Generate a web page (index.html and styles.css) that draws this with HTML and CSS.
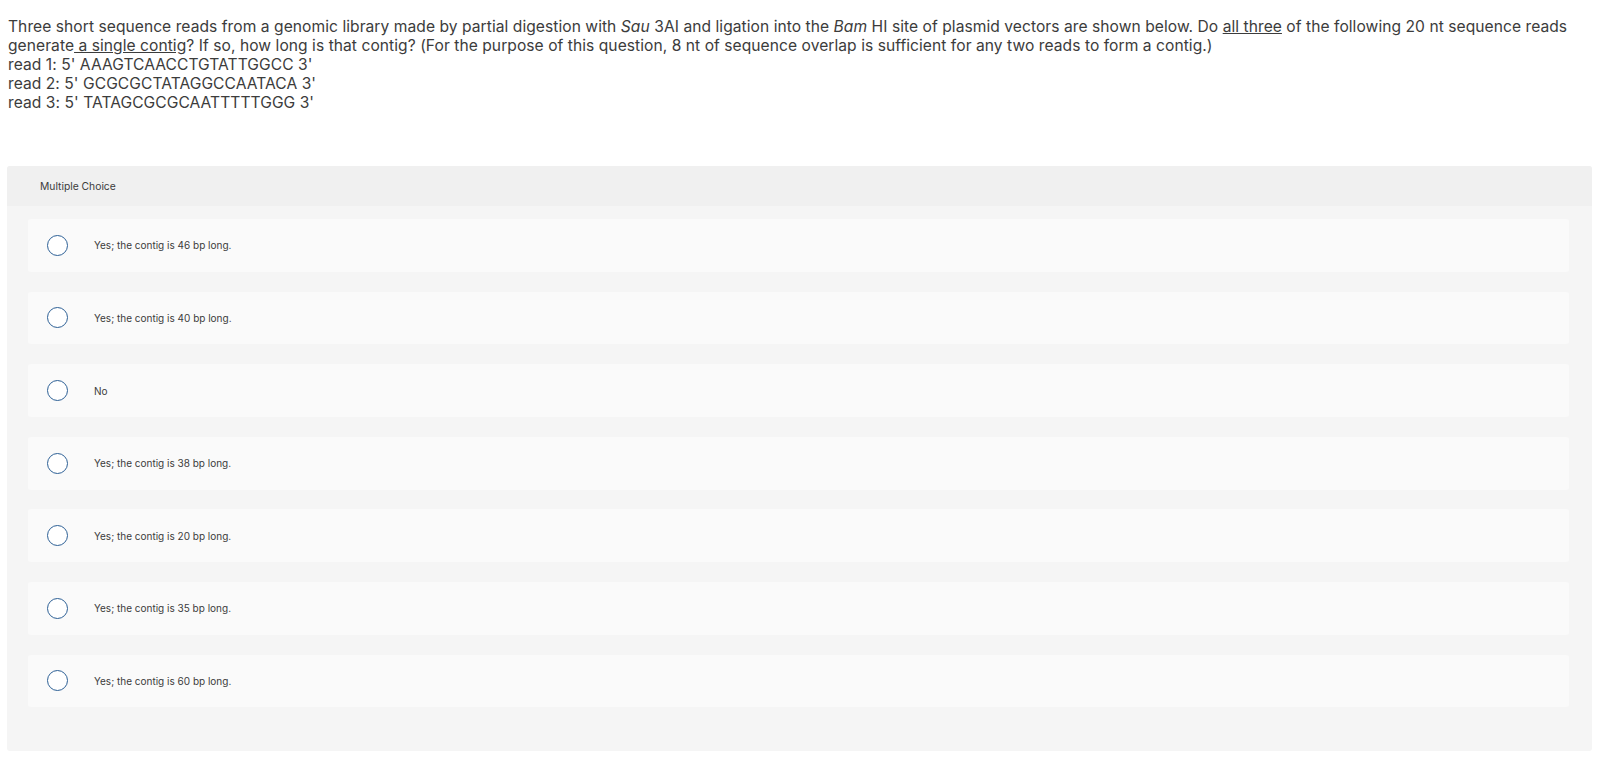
FILE: index.html
```html
<!DOCTYPE html>
<html>
<head>
<meta charset="utf-8">
<link rel="stylesheet" href="styles.css">
</head>
<body>
<div class="page">
  <div class="question">
    <p class="prompt">Three short sequence reads from a genomic library made by partial digestion with <i>Sau</i> 3AI and ligation into the <i>Bam</i> HI site of plasmid vectors are shown below. Do <u>all three</u> of the following 20 nt sequence reads generate<u> a single contig</u>? If so, how long is that contig? (For the purpose of this question, 8 nt of sequence overlap is sufficient for any two reads to form a contig.)</p>
    <p class="read">read 1: 5' AAAGTCAACCTGTATTGGCC 3'</p>
    <p class="read">read 2: 5' GCGCGCTATAGGCCAATACA 3'</p>
    <p class="read">read 3: 5' TATAGCGCGCAATTTTTGGG 3'</p>
  </div>
  <div class="mc">
    <div class="mc-head">Multiple Choice</div>
    <div class="mc-body">
      <div class="option"><span class="radio"></span><span class="label">Yes; the contig is 46 bp long.</span></div>
      <div class="option"><span class="radio"></span><span class="label">Yes; the contig is 40 bp long.</span></div>
      <div class="option"><span class="radio"></span><span class="label">No</span></div>
      <div class="option"><span class="radio"></span><span class="label">Yes; the contig is 38 bp long.</span></div>
      <div class="option"><span class="radio"></span><span class="label">Yes; the contig is 20 bp long.</span></div>
      <div class="option"><span class="radio"></span><span class="label">Yes; the contig is 35 bp long.</span></div>
      <div class="option"><span class="radio"></span><span class="label">Yes; the contig is 60 bp long.</span></div>
    </div>
  </div>
</div>
</body>
</html>
```
FILE: styles.css
```css
html, body {
  margin: 0;
  padding: 0;
  background: #ffffff;
}
body {
  font-family: Inter, "Open Sans", sans-serif;
  color: #3c3c3c;
}
.page {
  padding: 16.5px 11px 0 7px;
}
.question {
  font-size: 15.6px;
  line-height: 19px;
  letter-spacing: 0.05px;
}
.question p {
  margin: 0;
}
.question .prompt {
  padding-left: 1px;
}
.read {
  padding-left: 1px;
}
.mc {
  margin-top: 54.5px;
  background: #f5f5f5;
  border-radius: 3px;
  overflow: hidden;
}
.mc-head {
  height: 40px;
  background: #f0f0f0;
  display: flex;
  align-items: center;
  padding-left: 33px;
  font-size: 10.3px;
  color: #3c3c3c;
}
.mc-body {
  padding: 13px 23px 44px 21px;
  display: flex;
  flex-direction: column;
  gap: 19.8px;
}
.option {
  height: 52.8px;
  background: #fafafa;
  border-radius: 3px;
  display: flex;
  align-items: center;
  padding-left: 19px;
}
.radio {
  width: 19px;
  height: 19px;
  border: 1.6px solid #2c5f95;
  border-radius: 50%;
  background: #ffffff;
  flex: none;
}
.label {
  margin-left: 26px;
  font-size: 10px;
  color: #3c3c3c;
}
```
